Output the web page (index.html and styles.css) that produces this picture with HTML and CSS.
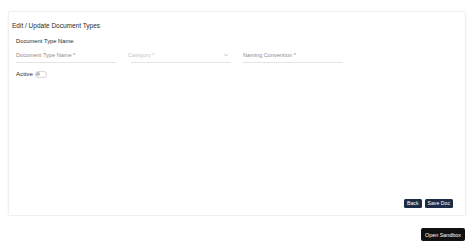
FILE: index.html
```html
<!DOCTYPE html>
<html lang="en">
<head>
    <meta charset="UTF-8">
    <title>Edit / Update Document Types</title>
    <link rel="stylesheet" href="styles.css">
</head>
<body>
    <div class="page">
        <div class="card">
            <h1 class="title">Edit / Update Document Types</h1>
            <div class="form">
                <div class="section-label">Document Type Name</div>
                <div class="fields">
                    <div class="field">
                        <input type="text" placeholder="Document Type Name *">
                    </div>
                    <div class="field select">
                        <span class="placeholder muted">Category *</span>
                        <svg class="chevron" width="6" height="4" viewBox="0 0 6 4">
                            <path d="M0.8 1 L3 3 L5.2 1" fill="none" stroke="#a8acb0" stroke-width="0.6"/>
                        </svg>
                    </div>
                    <div class="field">
                        <input type="text" placeholder="Naming Convention *">
                    </div>
                </div>
                <div class="active-row">
                    <span>Active</span>
                    <span class="toggle"><span class="knob"></span></span>
                </div>
            </div>
            <div class="actions">
                <button class="btn">Back</button>
                <button class="btn">Save Doc</button>
            </div>
        </div>
    </div>
    <button class="sandbox">Open Sandbox</button>
</body>
</html>
```

FILE: styles.css
```css
body {
    margin: 0;
    font-family: "Liberation Sans", Arial, sans-serif;
    color: #333;
    background: #fff;
}

.page {
    padding: 11px 8px 0 8px;
}

.card {
    width: 458px;
    height: 205px;
    box-sizing: border-box;
    border: 1px solid #f0f0f0;
    border-radius: 2px;
    box-shadow: 0 1px 2px rgba(0, 0, 0, 0.08);
    padding: 9px 12px 7px 3px;
    display: flex;
    flex-direction: column;
}

.title {
    margin: 0;
    font-size: 6.5px;
    font-weight: 400;
    line-height: 9px;
    color: #2a2a2a;
}

.form {
    padding-left: 4px;
    flex: 1;
}

.section-label {
    margin-top: 7px;
    font-size: 5.8px;
    line-height: 8px;
    color: #2a2a2a;
}

.fields {
    display: flex;
    gap: 15px;
    margin-top: 3px;
}

.field {
    width: 100px;
    height: 15px;
    border-bottom: 1px solid #e4e4e4;
    box-sizing: border-box;
    position: relative;
}

.field:nth-child(2) .placeholder {
    margin-left: -3px;
}

.field:last-child {
    margin-left: -3px;
}

input {
    display: block;
    border: none;
    outline: none;
    padding: 0;
    width: 100%;
    font-family: inherit;
    font-size: 5.6px;
    line-height: 8px;
    height: 8px;
    margin-top: 3px;
    background: transparent;
}

input::placeholder {
    color: #8c8c8c;
}

.placeholder {
    display: block;
    font-size: 5.6px;
    line-height: 8px;
    margin-top: 3px;
}

.muted {
    color: #c8c8c8;
}

.chevron {
    position: absolute;
    right: 2px;
    top: 5px;
}

.active-row {
    display: flex;
    align-items: center;
    gap: 2px;
    margin-top: 7px;
    font-size: 6.2px;
    line-height: 8px;
    color: #2a2a2a;
}

.toggle {
    display: inline-block;
    width: 10px;
    height: 5px;
    border-radius: 3px;
    border: 0.6px solid #d8d8d8;
    position: relative;
}

.knob {
    position: absolute;
    left: 0.5px;
    top: 0.5px;
    width: 4px;
    height: 4px;
    border-radius: 50%;
    background: #bcbcbc;
}

.actions {
    display: flex;
    justify-content: flex-end;
    gap: 3px;
}

.btn {
    background-color: #1d2a44;
    color: #fff;
    border: none;
    border-radius: 1.5px;
    font-family: inherit;
    font-size: 5.2px;
    height: 9px;
    line-height: 9px;
    padding: 0 3px;
    cursor: pointer;
}

.sandbox {
    position: fixed;
    right: 9px;
    bottom: 7px;
    background-color: #111;
    color: #fff;
    border: none;
    border-radius: 2px;
    font-family: inherit;
    font-size: 5.4px;
    height: 13px;
    padding: 0 4px;
    cursor: pointer;
}
```
